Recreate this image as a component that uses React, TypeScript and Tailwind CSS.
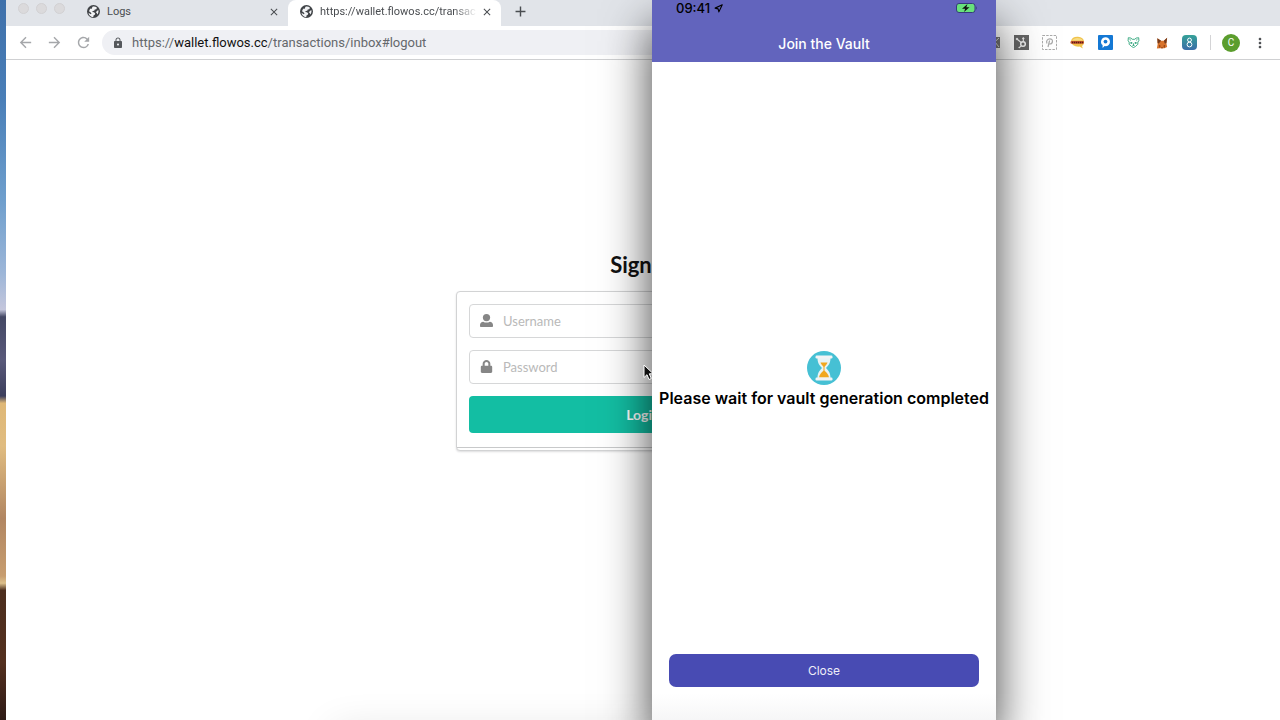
import type { ReactNode } from 'react';
import { Navigation } from 'lucide-react';
import { MdAdd, MdArrowBack, MdArrowForward, MdClose, MdLock, MdMoreVert, MdRefresh } from 'react-icons/md';
import { FaLock } from 'react-icons/fa';

function Globe() {
  return (
    <svg viewBox="0 0 26 26" className="size-[13px] shrink-0" aria-hidden="true">
      <circle cx="13" cy="13" r="13" fill="#3f4246" />
      <path
        d="M11 3.500c3-1 6.500-.3 9 2l-1.500 2.800-3 .7-1 2.500-3 .5-1 2 3.500.5 2.500 2.500-1 2.500-2.500 1.500-.5 3.500c-5-.5-9-4-9.500-9l4.500 3 1.500-1-1.500-2.500-3.500-2.500c.5-2 1.500-4 3-5.500l2 1z"
        fill="#f1f2f4"
      />
      <path d="M21 11l2-.5c.3 3.500-.7 6.500-2.500 8.500l-1-3-2-1.500z" fill="#f1f2f4" />
    </svg>
  );
}

function TabStrip() {
  return (
    <div className="flex h-[26px] items-stretch bg-[#e1e4e9] text-[11px] leading-none text-[#4a4d51]">
      <div className="flex w-[70px] shrink-0 items-start gap-[7px] pt-[3px] pl-[12px]">
        {['close', 'minimise', 'zoom'].map((name) => (
          <button
            key={name}
            aria-label={`${name} window`}
            className="size-[11px] rounded-full border border-[#d2d1d3] bg-[#dbdadc]"
          />
        ))}
      </div>
      <div className="flex w-[212px] shrink-0 items-center rounded-br-lg pr-[8px] pb-[3px] pl-[11px]">
        <Globe />
        <span className="ml-[7px] flex-1">Logs</span>
        <button aria-label="Close Logs tab">
          <MdClose className="size-[12px]" />
        </button>
      </div>
      <div className="flex w-[213px] shrink-0 items-center rounded-t-lg bg-white pr-[8px] pb-[3px] pl-[12px]">
        <Globe />
        <span className="ml-[7px] min-w-0 flex-1 mask-r-from-85% leading-4 whitespace-nowrap">
          https://wallet.flowos.cc/transac
        </span>
        <button aria-label="Close wallet tab" className="ml-[4px]">
          <MdClose className="size-[12px]" />
        </button>
      </div>
      <button aria-label="New tab" className="ml-[11px] pb-[3px]">
        <MdAdd className="size-[17px]" />
      </button>
    </div>
  );
}

function Extension({ label, children }: { label: string; children: ReactNode }) {
  return (
    <button aria-label={label} className="flex size-[15px] shrink-0 items-center justify-center">
      {children}
    </button>
  );
}

function Extensions() {
  return (
    <div className="flex shrink-0 items-center gap-[13px]">
      <Extension label="Mail">
        <svg viewBox="0 0 15 15" className="size-[15px]">
          <rect x="1" y="2" width="13" height="11" fill="#777" />
          <path d="M2 3l5.500 5L13 3M2 12l4-5M13 12L9 7" stroke="#ddd" fill="none" />
        </svg>
      </Extension>
      <Extension label="HubSpot">
        <svg viewBox="0 0 15 15" className="size-[15px]" fill="none" stroke="#eee">
          <rect width="15" height="15" fill="#666" stroke="none" />
          <circle cx="9" cy="9" r="2.300" strokeWidth="1.500" />
          <path d="M9.300 6.500V4M7.200 7.500L3.200 4.300M7.300 10.800L5.300 12.600" strokeWidth="1.100" />
          <circle cx="9.300" cy="3.400" r=".7" fill="#eee" />
          <circle cx="3" cy="4" r=".8" fill="#eee" />
          <circle cx="5.200" cy="12.500" r=".4" fill="#eee" />
        </svg>
      </Extension>
      <Extension label="Pin">
        <svg viewBox="0 0 15 15" className="size-[15px]" fill="none">
          <rect x="0.500" y="0.500" width="14" height="14" stroke="#aaa" strokeDasharray="2.500 1.200" />
          <path d="M6 12l1.600-6.500M5 8.500C3.800 6 5.500 3.800 7.800 3.800c4 0 3 5.200.2 5.200-.8 0-1.200-.4-1.300-.9" stroke="#aaa" strokeWidth="1.200" />
        </svg>
      </Extension>
      <Extension label="Speech bubble">
        <svg viewBox="0 0 15 15" className="size-[15px]">
          <path d="M1 6C1.500 3 4.500 1.500 8 1.800c3.500.2 6 2 6 5.200 0 2-.8 3.300-2 4l.8 2.500-3.300-1.900C5 12 1.500 10 1 6z" fill="#f0c34c" />
          <path d="M2 5.500C4 2.500 10 2 13 5.500z" fill="#f8dc83" />
          <rect x="0.500" y="6" width="13.500" height="2.800" rx="1.200" fill="#c4532f" />
          <path d="M2 7.400h11" stroke="#5a1b14" strokeWidth="1.500" strokeDasharray="1.300 .7" />
        </svg>
      </Extension>
      <Extension label="Chat">
        <svg viewBox="0 0 15 15" className="size-[15px]">
          <rect width="15" height="15" rx="1" fill="#1478d4" />
          <path d="M7.500 2.200a4.500 4.500 0 1 1 0 9c-.3 0-.6 0-.9-.1L4.600 13v-2.900A4.500 4.500 0 0 1 7.500 2.200z" fill="#fff" />
          <circle cx="7.500" cy="6.600" r="1.900" fill="#1478d4" />
        </svg>
      </Extension>
      <Extension label="Bear">
        <svg viewBox="0 0 15 15" className="size-[13px]" fill="none" stroke="#39a981" strokeWidth="1.100" strokeLinejoin="round">
          <path d="M1.500 2l3 .4 1.500 1.400h3l1.500-1.400 3-.4.200 3.500-1.200 1.500v2.500L10 12l-2.500 1.300L5 12 2.500 9.500V7L1.300 5.500z" />
          <path d="M3 4l1.500 1M12 4l-1.500 1M4.300 7.500h1.500v1H4.300zM9.200 7.500h1.500v1H9.200zM7.500 8.500v3M6.300 10.800h2.400" />
        </svg>
      </Extension>
      <Extension label="Fox wallet">
        <svg viewBox="0 0 15 15" className="size-[14px]">
          <path d="M2.500 2.500l4 2.500h3L13 1.800l-.8 6 .8 4-3 1.200H5l-3 .5.800-4.500z" fill="#d8732b" />
          <path d="M2.500 2.500l4 2.500-2.500 3-1.200-.5zM13 1.800L9.500 5l1 3 1.700-.2z" fill="#743a1c" />
          <path d="M4 9.500l2 1-1 2.500zM11 9.500l-2 1 1 2.500zM6.500 12h2l-.5 1.500h-1z" fill="#8a3e17" />
        </svg>
      </Extension>
      <Extension label="Eight">
        <svg viewBox="0 0 15 15" className="size-[15px]">
          <defs>
            <linearGradient id="eight" x1="0" y1="0" x2="0" y2="1">
              <stop offset="0" stopColor="#35a298" />
              <stop offset="1" stopColor="#3b6da8" />
            </linearGradient>
          </defs>
          <rect width="15" height="15" rx="4" fill="url(#eight)" />
          <circle cx="7.500" cy="5" r="1.900" fill="none" stroke="#fff" strokeWidth="1" />
          <circle cx="7.500" cy="9.500" r="2.400" fill="none" stroke="#fff" strokeWidth="1" />
        </svg>
      </Extension>
    </div>
  );
}

function Toolbar() {
  return (
    <div className="flex h-[34px] items-center border-b border-[#cfd0d2] bg-white pl-[11px]">
      <div className="flex shrink-0 items-center gap-[12px] text-[#a5a7aa]">
        <button aria-label="Back">
          <MdArrowBack className="size-[17px]" />
        </button>
        <button aria-label="Forward">
          <MdArrowForward className="size-[17px]" />
        </button>
        <button aria-label="Reload">
          <MdRefresh className="size-[17px]" />
        </button>
      </div>
      <div className="mr-[5px] ml-[10px] flex h-[25px] min-w-0 flex-1 items-center rounded-full bg-[#eff0f4] pl-[10px] text-[13px] text-[#65686c]">
        <MdLock className="size-[12px] shrink-0 text-[#55585c]" />
        <span className="ml-[8px] whitespace-nowrap">
          https://<span className="text-[#111]">wallet.flowos.cc</span>/transactions/inbox#logout
        </span>
      </div>
      <Extensions />
      <div className="ml-[13px] h-[15px] w-px shrink-0 bg-[#d4d4d6]" />
      <button
        aria-label="Profile"
        className="ml-[11px] flex size-[18px] shrink-0 items-center justify-center rounded-full bg-[#5b9d2d] text-[10px] leading-none text-white"
      >
        C
      </button>
      <button aria-label="Menu" className="mr-[12px] ml-[12px] shrink-0 text-[#4b4e52]">
        <MdMoreVert className="size-[16px]" />
      </button>
    </div>
  );
}

const fieldClass =
  "h-[34px] w-full rounded-[4px] border border-[#d6d7d8] bg-white pr-3 pl-[33px] font-['Lato',sans-serif] text-[13px] text-[#333] placeholder:text-[#b9b9b9] focus:outline-none";

function SignIn() {
  return (
    <main className="flex flex-1 flex-col items-center pt-[189px] font-['Lato',sans-serif]">
      <h1 className="text-[22px] leading-8 font-bold text-[#111]">Sign In</h1>
      <form
        className="mt-[10px] w-[374px] rounded-[4px] border border-[#d2d3d4] bg-white shadow-[0_1px_2px_#22242626]"
        onSubmit={(event) => event.preventDefault()}
      >
        <div className="flex flex-col gap-[12px] border-b border-[#c8c9ca] px-[12px] pt-[12px] pb-[14px]">
          <label className="relative block">
            <svg viewBox="0 0 14 14" className="absolute top-[10px] left-[11px] size-[13px]" fill="#868686" aria-hidden="true">
              <circle cx="7" cy="3.900" r="3.900" />
              <path d="M3.500 8.300c2 1.300 5 1.300 7 0 2 .2 3.500 1.600 3.500 3.500v1c0 .7-.5 1.200-1.200 1.200H1.200C.5 14 0 13.500 0 12.800v-1c0-1.900 1.500-3.300 3.500-3.500z" />
            </svg>
            <input className={fieldClass} type="text" aria-label="Username" placeholder="Username" />
          </label>
          <label className="relative block">
            <FaLock className="absolute top-[10px] left-[11px] size-[13px] text-[#868686]" />
            <input className={fieldClass} type="password" aria-label="Password" placeholder="Password" />
          </label>
          <button className="h-[37px] rounded-[4px] bg-[#13bea3] text-[14px] font-bold text-white">Login</button>
        </div>
        <div className="h-[2px]" />
      </form>
    </main>
  );
}

function Hourglass() {
  return (
    <svg viewBox="0 0 34 34" className="size-[34px]">
      <circle cx="17" cy="17" r="17" fill="#46c0d4" />
      <path d="M10.500 7h13c0 5-2 7.500-4.500 10 2.500 2.500 4.500 5 4.500 10h-13c0-5 2-7.500 4.500-10-2.500-2.500-4.500-5-4.500-10z" fill="#e9f3f5" />
      <path d="M13.500 11.500h7c-.6 1.700-1.700 3-3 4.300h-1c-1.300-1.300-2.400-2.600-3-4.300z" fill="#f2a71f" />
      <path d="M16.500 15h1v6h-1z" fill="#f2a71f" />
      <path d="M17 19.500c2.500 1.600 4.500 3.800 5 7H12c.5-3.200 2.500-5.400 5-7z" fill="#f2a71f" />
      <rect x="8.500" y="4.500" width="17" height="3" rx="1.200" fill="#f2f3f5" />
      <rect x="8.500" y="26.500" width="17" height="3" rx="1.200" fill="#f2f3f5" />
    </svg>
  );
}

function Phone() {
  return (
    <section className="absolute inset-y-0 left-[50.94%] flex w-[344px] flex-col bg-white font-['Inter',sans-serif] shadow-[0_25px_45px_rgba(0,0,0,0.75)]">
      <header className="h-[62px] bg-[#6264bd]">
        <div className="flex h-[16px] items-center pr-[18px] pl-[24px] text-black">
          <span className="text-[13px] leading-4 font-medium">09:41</span>
          <Navigation className="ml-[4px] size-[9px]" strokeWidth={3} />
          <svg viewBox="0 0 22 10" className="ml-auto h-[10px] w-[22px]" role="img" aria-label="Battery charging">
            <rect x="0.500" y="0.500" width="18.500" height="9" rx="2.500" fill="#68e27c" stroke="#353b7c" />
            <path d="M20.300 3.300v3.400c1-.4 1-3 0-3.400z" fill="#353b7c" />
            <path d="M11.500 1L6 5.700h3.200L8 9l5.500-4.700h-3.200z" fill="#111" />
          </svg>
        </div>
        <h2 className="pt-[18px] text-center text-[14px] leading-5 font-medium text-white">Join the Vault</h2>
      </header>
      <div className="flex flex-1 flex-col items-center justify-center pt-[42px]">
        <Hourglass />
        <p className="mt-[3px] text-[16px] leading-5 font-semibold whitespace-nowrap text-black">
          Please wait for vault generation completed
        </p>
      </div>
      <footer className="bg-linear-to-t from-[#f6f6f7] to-white to-40% px-[17px] pb-[33px]">
        <button className="h-[33px] w-full rounded-[7px] bg-[#484bb3] text-[12px] text-[#eeeef8]">Close</button>
      </footer>
    </section>
  );
}

export default function App() {
  return (
    <div className="relative flex h-screen overflow-hidden bg-white font-['Roboto',sans-serif]">
      <div className="w-[6px] shrink-0 bg-[linear-gradient(#3f70aa_0%,#4a7fb8_14%,#6f9fcd_28%,#9db6d8_38%,#c4c6dc_43%,#444865_44%,#59597a_50%,#3c3e5c_55%,#dfb877_56%,#e0bc80_62%,#b18662_72%,#c79d6f_80%,#dcc08b_81%,#4c2e1e_82%,#54301f_92%,#2e1b16_100%)]" />
      <div className="flex min-w-0 flex-1 flex-col">
        <TabStrip />
        <Toolbar />
        <SignIn />
      </div>
      <div className="pointer-events-none absolute -bottom-[40px] left-[26%] h-[30px] w-[50%] shadow-[0_0_40px_rgba(0,0,0,0.12)]" />
      <Phone />
      <svg viewBox="0 0 9 17" className="pointer-events-none absolute top-[364px] left-[643px] h-[17px] w-[9px] overflow-hidden">
        <path d="M1 1v12.500l3-2.800 2 4.800 2.300-1-2-4.700h4z" fill="#111" stroke="#fff" />
      </svg>
    </div>
  );
}
